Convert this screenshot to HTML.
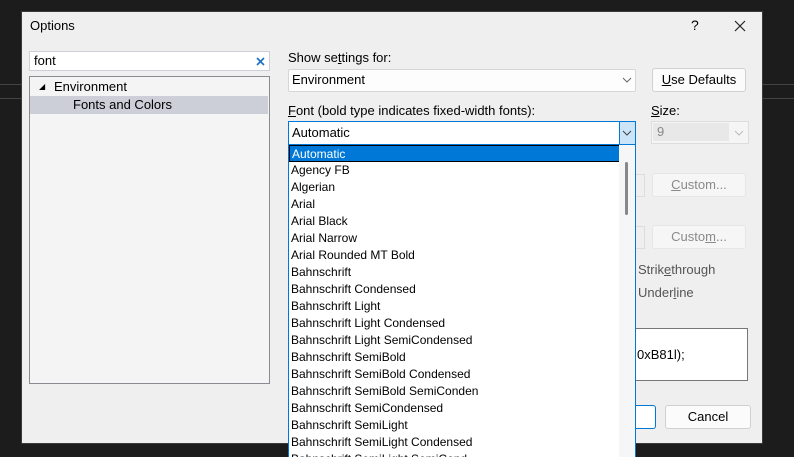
<!DOCTYPE html>
<html style="overflow:hidden;width:794px;height:457px"><head><style>
*{margin:0;padding:0;box-sizing:border-box}
body{width:794px;height:457px;background:#1c1c1c;position:relative;overflow:hidden;font-family:"Segoe UI","Liberation Sans",sans-serif;font-size:12px;color:#000}
.a{position:absolute}
.dlg{left:21px;top:11px;width:742px;height:433px;background:#efefef;border:1px solid #3a3a3a}
.lb{position:absolute;left:288px;top:145px;width:348px;height:312px;background:#fff;border-left:1px solid #0078d7;border-right:1px solid #0078d7;overflow:hidden}
.it{height:17px;line-height:17px;padding-left:2px;white-space:nowrap}
u{text-decoration:underline}
.btn{position:absolute;background:#fbfbfb;border:1px solid #d0d0d0;border-radius:3px;text-align:center;line-height:22px}
.dis{color:#8a8a8a;background:#f6f6f6;border-color:#e6e6e6}
</style></head><body>
<div class="a" style="left:0;top:84px;width:21px;height:1px;background:#444"></div>
<div class="a" style="left:0;top:98px;width:21px;height:1px;background:#444"></div>
<div class="a" style="left:763px;top:84px;width:31px;height:1px;background:#444"></div>
<div class="a" style="left:763px;top:98px;width:31px;height:1px;background:#444"></div>
<div class="a dlg"></div>
<div class="a" style="left:30px;top:18px;font-size:13px">Options</div>
<div class="a" style="left:691px;top:17px;font-size:14px">?</div>
<svg class="a" style="left:734px;top:20px" width="12" height="12"><path d="M1 1L11 11M11 1L1 11" stroke="#222" stroke-width="1.2"/></svg>
<div class="a" style="left:29px;top:51px;width:241px;height:20px;background:#fff;border:1px solid #cdd0d8"></div>
<div class="a" style="left:34px;top:53px;font-size:13px">font</div>
<svg class="a" style="left:256px;top:57px" width="9" height="9"><path d="M1 1L8 8M8 1L1 8" stroke="#1a6fc7" stroke-width="1.6"/></svg>
<div class="a" style="left:29px;top:76px;width:241px;height:308px;background:#f4f4f4;border:1px solid #8a8a90"></div>
<div class="a" style="left:39px;top:82px;font-size:8px">◢</div>
<div class="a" style="left:54px;top:79px;font-size:13px">Environment</div>
<div class="a" style="left:30px;top:96px;width:238px;height:18px;background:#ccced8"></div>
<div class="a" style="left:73px;top:97px;font-size:13px">Fonts and Colors</div>
<div class="a" style="left:288px;top:50px;font-size:13px">Show se<u>t</u>tings for:</div>
<div class="a" style="left:288px;top:69px;width:348px;height:23px;background:#fdfdfd;border:1px solid #d6d6d6;border-radius:2px"></div>
<div class="a" style="left:292px;top:72px;font-size:13px">Environment</div>
<svg class="a" style="left:622px;top:77px" width="10" height="6"><path d="M1 1L5 5L9 1" stroke="#666" fill="none"/></svg>
<div class="btn" style="left:652px;top:68px;width:94px;height:24px;font-size:13px"><u>U</u>se Defaults</div>
<div class="a" style="left:288px;top:103px;font-size:13px"><u>F</u>ont (bold type indicates fixed-width fonts):</div>
<div class="a" style="left:651px;top:103px;font-size:13px"><u>S</u>ize:</div>
<div class="a" style="left:288px;top:121px;width:348px;height:24px;background:#fff;border:1px solid #0078d7"></div>
<div class="a" style="left:292px;top:125px;font-size:13px">Automatic</div>
<div class="a" style="left:619px;top:122px;width:16px;height:22px;background:#cce4f7;border-left:1px solid #0078d7"></div>
<svg class="a" style="left:622px;top:130px" width="10" height="6"><path d="M1 1L5 5L9 1" stroke="#444" fill="none"/></svg>
<div class="a" style="left:651px;top:121px;width:98px;height:23px;border:1px solid #ddd;background:#f5f5f5"></div>
<div class="a" style="left:653px;top:123px;width:76px;height:18px;background:#e8e8e8"></div>
<div class="a" style="left:657px;top:124px;color:#888;font-size:13px">9</div>
<svg class="a" style="left:734px;top:130px" width="10" height="6"><path d="M1 1L5 5L9 1" stroke="#bbb" fill="none"/></svg>
<div class="btn dis" style="left:652px;top:173px;width:94px;height:24px;font-size:13px"><u>C</u>ustom...</div>
<div class="btn dis" style="left:652px;top:225px;width:94px;height:24px;font-size:13px">Custo<u>m</u>...</div>
<div class="a" style="left:636px;top:174px;width:9px;height:23px;border:1px solid #ddd;border-left:none"></div>
<div class="a" style="left:636px;top:226px;width:9px;height:23px;border:1px solid #ddd;border-left:none"></div>
<div class="a" style="left:638px;top:262px;font-size:13px;color:#555">Strik<u>e</u>through</div>
<div class="a" style="left:638px;top:285px;font-size:13px;color:#555">Under<u>l</u>ine</div>
<div class="a" style="left:636px;top:328px;width:112px;height:53px;background:#fff;border:1px solid #777;border-left:none"></div>
<div class="a" style="left:637px;top:347px;font-size:13px">0xB81l);</div>
<div class="a" style="left:636px;top:405px;width:20px;height:24px;background:#fff;border:1px solid #0078d7;border-left:none;border-radius:0 3px 3px 0"></div>
<div class="btn" style="left:665px;top:405px;width:86px;height:24px;font-size:13px">Cancel</div>
<div class="lb">
<div class="it" style="background:#0078d7;color:#fff;border:1px solid #000;width:331px;margin-left:0">Automatic</div>
<div class="it">Agency FB</div><div class="it">Algerian</div><div class="it">Arial</div><div class="it">Arial Black</div><div class="it">Arial Narrow</div><div class="it">Arial Rounded MT Bold</div><div class="it">Bahnschrift</div><div class="it">Bahnschrift Condensed</div><div class="it">Bahnschrift Light</div><div class="it">Bahnschrift Light Condensed</div><div class="it">Bahnschrift Light SemiCondensed</div><div class="it">Bahnschrift SemiBold</div><div class="it">Bahnschrift SemiBold Condensed</div><div class="it">Bahnschrift SemiBold SemiConden</div><div class="it">Bahnschrift SemiCondensed</div><div class="it">Bahnschrift SemiLight</div><div class="it">Bahnschrift SemiLight Condensed</div><div class="it">Bahnschrift SemiLight SemiCond</div>
</div>
<div class="a" style="left:619px;top:145px;width:17px;height:312px;background:#f6f6f6;border-right:1px solid #0078d7"></div>
<div class="a" style="left:625px;top:162px;width:3px;height:53px;background:#888;border-radius:2px"></div>
</body></html>
